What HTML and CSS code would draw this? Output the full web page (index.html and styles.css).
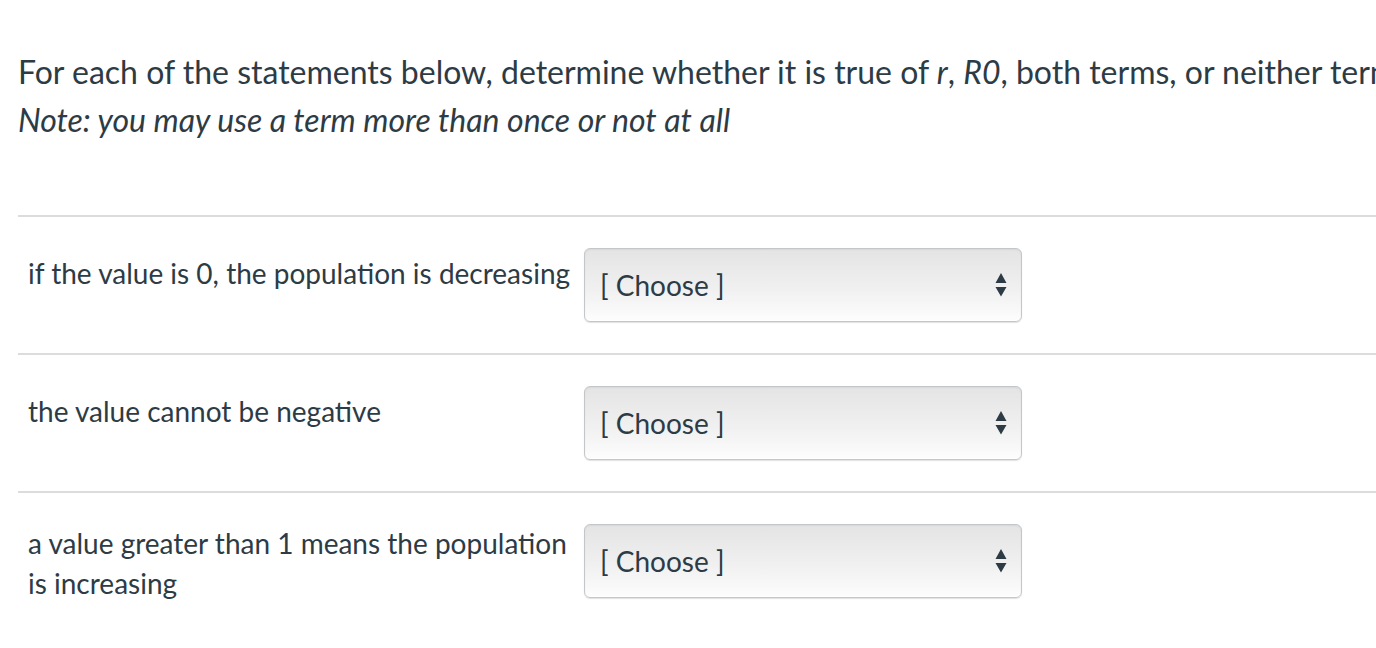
FILE: index.html
```html
<!DOCTYPE html>
<html>
<head>
<meta charset="utf-8">
<link rel="stylesheet" href="styles.css">
</head>
<body>
<div class="quiz">
  <div class="intro">
    <p class="lead">For each of the statements below, determine whether it is true of <em>r</em>, <em>R0</em>, both terms, or neither term.</p>
    <p class="note"><em>Note: you may use a term more than once or not at all</em></p>
  </div>
  <div class="row">
    <div class="label">if the value is 0, the population is decreasing</div>
    <div class="select"><span>[ Choose ]</span><svg class="arrows" width="12" height="24" viewBox="0 0 12 24"><path d="M6 0 L11.5 10 L0.5 10 Z M0.5 14 L11.5 14 L6 23.5 Z" fill="#2d3b45"/></svg></div>
  </div>
  <div class="row">
    <div class="label">the value cannot be negative</div>
    <div class="select"><span>[ Choose ]</span><svg class="arrows" width="12" height="24" viewBox="0 0 12 24"><path d="M6 0 L11.5 10 L0.5 10 Z M0.5 14 L11.5 14 L6 23.5 Z" fill="#2d3b45"/></svg></div>
  </div>
  <div class="row">
    <div class="label">a value greater than 1 means the population is increasing</div>
    <div class="select"><span>[ Choose ]</span><svg class="arrows" width="12" height="24" viewBox="0 0 12 24"><path d="M6 0 L11.5 10 L0.5 10 Z M0.5 14 L11.5 14 L6 23.5 Z" fill="#2d3b45"/></svg></div>
  </div>
</div>
</body>
</html>
```
FILE: styles.css
```css
html, body {
  margin: 0;
  padding: 0;
  background: #fff;
  overflow: hidden;
}
body {
  font-family: Lato, "Open Sans", sans-serif;
  color: #2d3b45;
}
.quiz {
  padding-left: 18px;
  width: 1400px;
}
.intro {
  padding-top: 48px;
  padding-bottom: 71px;
}
.intro p {
  margin: 0;
  font-size: 32px;
  line-height: 48px;
  white-space: nowrap;
}
.row {
  border-top: 2px solid #dcdcdc;
  display: flex;
  align-items: flex-start;
  padding: 31px 0 31px 10px;
}
.label {
  width: 556px;
  flex: none;
  font-size: 28px;
  line-height: 40px;
  min-height: 52px;
  margin-top: -1px;
  display: flex;
  align-items: center;
}
.select {
  width: 407px;
  height: 72px;
  border: 1px solid #c4c7ca;
  border-radius: 6px;
  background: linear-gradient(to bottom, #e4e4e4 0%, #f0f0f0 55%, #fdfdfd 100%);
  box-shadow: inset 0 1px 2px rgba(0,0,0,0.06), inset 0 -1px 0 #fff, 0 1px 1px rgba(0,0,0,0.12);
  display: flex;
  align-items: center;
  justify-content: space-between;
  padding: 0 14px 0 15px;
  box-sizing: content-box;
  font-size: 28px;
}
.arrows {
  display: block;
}
```
